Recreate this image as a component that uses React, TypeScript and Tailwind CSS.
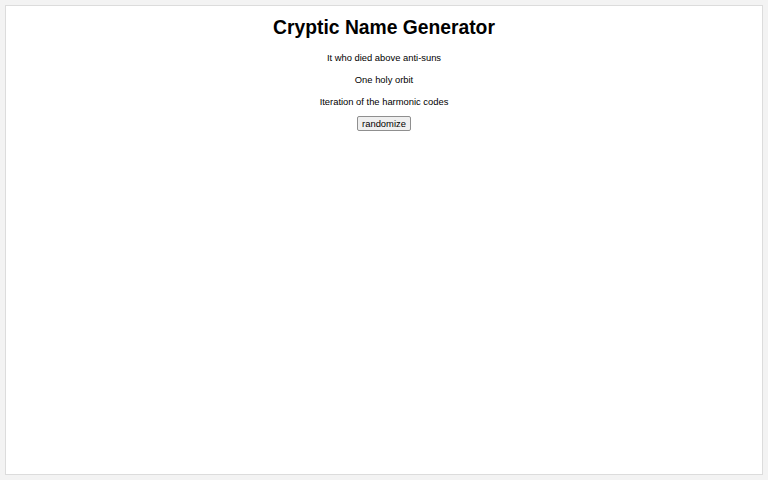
import React, { useState } from 'react';

const lines = ['It who died above anti-suns', 'One holy orbit', 'Iteration of the harmonic codes'];

const App: React.FC = () => {
  const [names] = useState(lines);

  return (
    <div className="h-[480px] w-[768px] bg-[#f3f3f3] p-[5px] font-['Liberation_Sans',Arial,sans-serif] text-black">
      <div className="flex h-[470px] flex-col items-center border border-[#dcdcdc] bg-white">
        <h1 className="mt-[10px] text-[19.3px] font-bold leading-[24px]">Cryptic Name Generator</h1>
        <div className="mt-[12px] flex flex-col items-center gap-[10px]">
          {names.map((name) => (
            <p key={name} className="text-[9.4px] leading-[12px]">
              {name}
            </p>
          ))}
          <button className="-mt-[2px] h-[15px] rounded-[2px] border border-[#8f8f8f] bg-[#efefef] px-[4px] text-[9.4px] leading-[12px]">
            randomize
          </button>
        </div>
      </div>
    </div>
  );
};

export default App;
